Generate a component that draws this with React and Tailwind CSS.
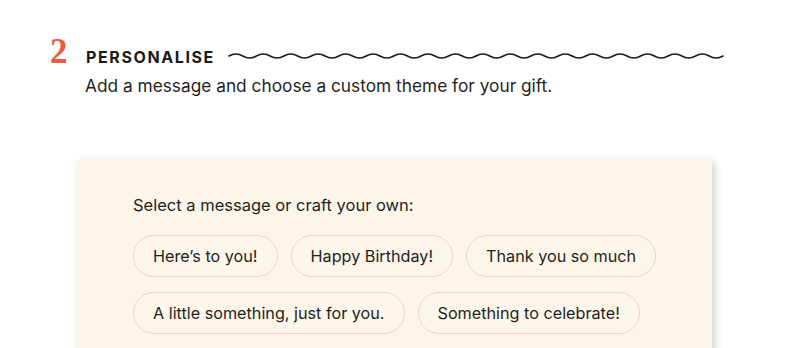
import React from 'react';

const messages = [
  ["Here’s to you!", 'Happy Birthday!', 'Thank you so much'],
  ['A little something, just for you.', 'Something to celebrate!'],
];

function Wave() {
  const halves = 36;
  const step = 494 / halves;
  let d = `M0 4 q ${step / 2} -4 ${step} 0`;
  for (let i = 1; i < halves; i++) d += ` t ${step} 0`;
  return (
    <svg width="496" height="8" viewBox="-1 0 496 8" className="block">
      <path d={d} fill="none" stroke="#1a1a1a" strokeWidth="1.6" strokeLinecap="round" />
    </svg>
  );
}

export default function App() {
  return (
    <div className="w-[800px] h-[348px] overflow-hidden bg-white text-[#1f1f1f] font-['Inter',sans-serif]">
      {/* Step header */}
      <div className="pl-[50px] pt-[34px]">
        <div className="flex items-baseline">
          <span className="w-[36px] text-[35px] leading-none font-bold text-[#ef5a3c] font-['Liberation_Serif',serif]">2</span>
          <span className="text-[16px] leading-[24px] font-bold tracking-[1.6px] text-[#1a1a1a]">PERSONALISE</span>
          <span className="self-start ml-[13px] mt-[18px]"><Wave /></span>
        </div>
        <p className="pl-[35px] mt-[5px] text-[17.3px] leading-[24px]">
          Add a message and choose a custom theme for your gift.
        </p>
      </div>

      {/* Message card */}
      <div className="ml-[77px] mt-[61px] w-[635px] h-[240px] rounded-[4px] bg-[#fcf5ea] shadow-[3px_3px_8px_rgba(0,0,0,0.18)] pl-[56px] pt-[34px]">
        <p className="text-[16.5px] leading-[24px]">Select a message or craft your own:</p>
        <div className="mt-[18px] flex flex-col gap-[15px]">
          {messages.map((row, i) => (
            <div key={i} className="flex gap-[13px]">
              {row.map((m) => (
                <button
                  key={m}
                  className="h-[42px] px-[19px] rounded-full border-[1.5px] border-[#f8cdd6] text-[16.2px] text-[#1f1f1f] whitespace-nowrap"
                >
                  {m}
                </button>
              ))}
            </div>
          ))}
        </div>
      </div>
    </div>
  );
}
